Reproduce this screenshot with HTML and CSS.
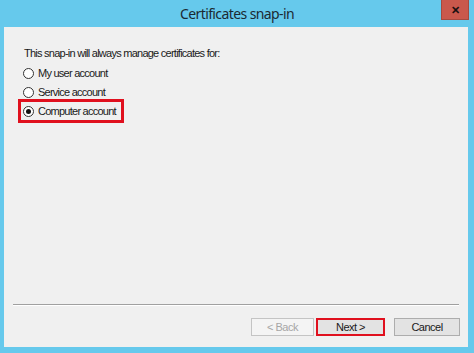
FILE: index.html
```html
<!DOCTYPE html>
<html lang="en">
<head>
  <meta charset="UTF-8" />
  <meta name="viewport" content="width=device-width, initial-scale=1.0"/>
  <title>Certificates snap-in</title>
  <link rel="stylesheet" href="styles.css">
</head>
<body>

<div class="window">
  <div class="titlebar">
    <span></span>
    <div class="title">Certificates snap-in</div>
    <div class="close">&#x2715;</div>
  </div>

  <div class="content">
    <p class="intro">This snap-in will always manage certificates for:</p>
    <div class="options">
      <label class="option"><span class="radio"></span>My user account</label>
      <label class="option"><span class="radio"></span>Service account</label>
      <label class="option marked"><span class="radio checked"></span>Computer account</label>
    </div>

    <div class="separator"></div>

    <div class="buttons">
      <button type="button" class="btn" disabled>&lt; Back</button>
      <button type="button" class="btn marked">Next &gt;</button>
      <button type="button" class="btn">Cancel</button>
    </div>
  </div>
</div>

</body>
</html>
```

FILE: styles.css
```css
body {
  margin: 0;
  font-family: 'Liberation Sans', Arial, sans-serif;
  background: #66c9ec;
}

.window {
  width: 474px;
  height: 353px;
  background: #66c9ec;
  display: flex;
  flex-direction: column;
}

.titlebar {
  height: 27px;
  display: grid;
  grid-template-columns: 1fr auto 1fr;
  align-items: start;
}

.title {
  font-family: 'Noto Sans', sans-serif;
  font-size: 14px;
  line-height: 27px;
  color: #1b2a33;
  letter-spacing: -0.6px;
}

.close {
  justify-self: end;
  width: 28px;
  height: 20px;
  margin-right: 5px;
  background: #c9584c;
  border: 1px solid #a44a40;
  border-top: none;
  box-sizing: border-box;
  color: #1a1010;
  font-size: 11px;
  font-weight: bold;
  text-align: center;
  line-height: 20px;
}

.content {
  flex: 1;
  margin: 0 6px 6px 4px;
  background: #f0f0f0;
  display: flex;
  flex-direction: column;
  font-size: 11px;
  color: #1a1a1a;
  letter-spacing: -0.75px;
}

.intro {
  margin: 20px 0 6px 20px;
  line-height: 13px;
}

.options {
  display: flex;
  flex-direction: column;
  align-items: flex-start;
  gap: 5px;
  padding-left: 19px;
}

.option {
  display: flex;
  align-items: center;
  gap: 4px;
  height: 14px;
}

.option.marked {
  outline: 3px solid #e0101e;
  outline-offset: 2px;
  padding-right: 3px;
}

.radio {
  width: 11px;
  height: 11px;
  box-sizing: border-box;
  border: 1px solid #333;
  border-radius: 50%;
  background: #fff;
  display: flex;
  align-items: center;
  justify-content: center;
}

.radio.checked::after {
  content: "";
  width: 5px;
  height: 5px;
  border-radius: 50%;
  background: #111;
}

.separator {
  margin: auto 9px 0 9px;
  height: 1px;
  background: #a0a0a0;
  border-bottom: 1px solid #fff;
}

.buttons {
  display: flex;
  justify-content: flex-end;
  gap: 2px;
  padding: 12px 8px 11px;
}

.btn {
  width: 63px;
  height: 18px;
  padding: 0;
  font-family: inherit;
  font-size: 11px;
  letter-spacing: -0.5px;
  color: #1a1a1a;
  background: #e3e3e3;
  border: 1px solid #adadad;
}

.btn:disabled {
  color: #a6a6a6;
  background: #f4f4f4;
  border-color: #c4c4c4;
}

.btn.marked {
  width: 69px;
  border: 2px solid #e0101e;
  margin-right: 7px;
}

.btn.marked + .btn {
  width: 66px;
}
```
